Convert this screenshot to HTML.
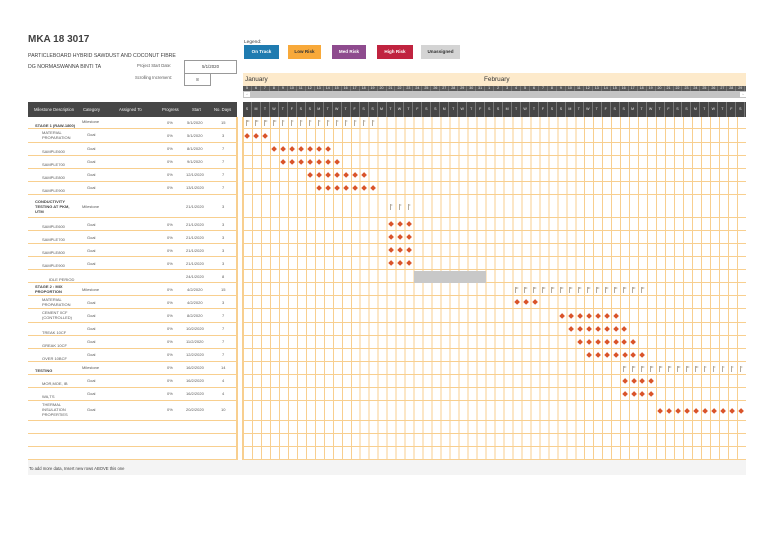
<!DOCTYPE html>
<html><head><meta charset="utf-8"><style>
*{margin:0;padding:0;box-sizing:border-box}
body{width:768px;height:543px;background:#fff;font-family:"Liberation Sans",sans-serif;color:#404040;position:relative;overflow:hidden}
.a{position:absolute;white-space:nowrap}
.t{font-size:4.2px;line-height:5px}
.row{position:absolute;left:28px;width:209px;border-bottom:1px solid #f8cf8f}
.grow{position:absolute;left:243px;width:503px;border-bottom:1px solid #f8cf8f}
.grid{position:absolute;left:243px;top:117px;width:503px;height:343px;background:repeating-linear-gradient(to right,#f8cf8f 0 1px,transparent 1px 8.98px)}
.bar{position:absolute;display:flex}
.bar i{display:block;width:8.98px;flex:none;height:100%;position:relative}
.d i::after{content:"";position:absolute;left:2.4px;top:50%;width:4.2px;height:4.2px;margin-top:-2.1px;background:#d9542a;transform:rotate(45deg)}
.f i::before{content:"";position:absolute;left:3px;top:50%;margin-top:-3px;width:0.8px;height:6px;background:#b3aa9c}
.f i::after{content:"";position:absolute;left:3.6px;top:50%;margin-top:-3px;border-left:3px solid #b3aa9c;border-top:1.5px solid transparent;border-bottom:1.5px solid transparent}
.hdr{display:flex;position:absolute;left:243px;width:503px;overflow:hidden}
.hdr span{width:8.98px;flex:none;text-align:center;font-size:3.6px;color:#eee;border-right:0.5px solid #777}
.lg{position:absolute;top:45px;height:14px;font-size:4.6px;font-weight:bold;text-align:center;line-height:13px}
.c{position:absolute;font-size:4px;line-height:5px;color:#595959;white-space:nowrap}
</style></head><body>
<div class="a" style="left:28px;top:34px;font-size:10px;font-weight:bold;color:#404040">MKA 18 3017</div>
<div class="a" style="left:28px;top:53px;font-size:5.2px">PARTICLEBOARD HYBRID SAWDUST AND COCONUT FIBRE</div>
<div class="a" style="left:28px;top:64px;font-size:5.2px">DG NORMASWANNA BINTI TA</div>
<div class="a t" style="left:137px;top:63px;color:#595959">Project Start Date:</div>
<div class="a t" style="left:135px;top:75px;color:#595959">Scrolling Increment:</div>
<div class="a" style="left:184px;top:60px;width:53px;height:14px;border:1px solid #999;font-size:4.4px;text-align:center;line-height:12px">5/1/2020</div>
<div class="a" style="left:184px;top:73px;width:27px;height:13px;border:1px solid #999;font-size:4.4px;text-align:center;line-height:11px">8</div>

<div class="a" style="left:244px;top:40px;font-size:4.8px">Legend:</div>
<div class="lg" style="left:244px;width:35px;background:#1f7bb0;color:#fff">On Track</div>
<div class="lg" style="left:288px;width:33px;background:#f8a93a;color:#333">Low Risk</div>
<div class="lg" style="left:332px;width:34px;background:#8e4b8e;color:#fff">Med Risk</div>
<div class="lg" style="left:377px;width:36px;background:#c0233f;color:#fff">High Risk</div>
<div class="lg" style="left:421px;width:39px;background:#d4d4d4;color:#333">Unassigned</div>

<div class="a" style="left:243px;top:73px;width:503px;height:13px;background:#fdeacb"></div>
<div class="a" style="left:245px;top:76px;font-size:6.4px;color:#333">January</div>
<div class="a" style="left:484px;top:76px;font-size:6.4px;color:#333">February</div>
<div class="hdr" style="top:86px;height:5px;background:#595959;line-height:5px">
<span>5</span><span>6</span><span>7</span><span>8</span><span>9</span><span>10</span><span>11</span><span>12</span><span>13</span><span>14</span><span>15</span><span>16</span><span>17</span><span>18</span><span>19</span><span>20</span><span>21</span><span>22</span><span>23</span><span>24</span><span>25</span><span>26</span><span>27</span><span>28</span><span>29</span><span>30</span><span>31</span><span>1</span><span>2</span><span>3</span><span>4</span><span>5</span><span>6</span><span>7</span><span>8</span><span>9</span><span>10</span><span>11</span><span>12</span><span>13</span><span>14</span><span>15</span><span>16</span><span>17</span><span>18</span><span>19</span><span>20</span><span>21</span><span>22</span><span>23</span><span>24</span><span>25</span><span>26</span><span>27</span><span>28</span><span>29</span></div>
<div class="a" style="left:243px;top:91px;width:503px;height:7px;background:#c4c4c4"></div>
<div class="a" style="left:244px;top:92px;width:6px;height:5px;background:#fff;font-size:3px;text-align:center;line-height:5px">‹</div>
<div class="a" style="left:740px;top:92px;width:6px;height:5px;background:#fff;font-size:3px;text-align:center;line-height:5px">›</div>
<div class="hdr" style="top:102px;height:15px;background:#464646;line-height:15px">
<span>S</span><span>M</span><span>T</span><span>W</span><span>T</span><span>F</span><span>S</span><span>S</span><span>M</span><span>T</span><span>W</span><span>T</span><span>F</span><span>S</span><span>S</span><span>M</span><span>T</span><span>W</span><span>T</span><span>F</span><span>S</span><span>S</span><span>M</span><span>T</span><span>W</span><span>T</span><span>F</span><span>S</span><span>S</span><span>M</span><span>T</span><span>W</span><span>T</span><span>F</span><span>S</span><span>S</span><span>M</span><span>T</span><span>W</span><span>T</span><span>F</span><span>S</span><span>S</span><span>M</span><span>T</span><span>W</span><span>T</span><span>F</span><span>S</span><span>S</span><span>M</span><span>T</span><span>W</span><span>T</span><span>F</span><span>S</span></div>

<div class="a" style="left:28px;top:102px;width:209px;height:15px;background:#464646;color:#eee;font-size:4.2px;line-height:15px">
<span class="a" style="left:6px">Milestone Description</span><span class="a" style="left:55px">Category</span><span class="a" style="left:91px">Assigned To</span><span class="a" style="left:134px">Progress</span><span class="a" style="left:164px">Start</span><span class="a" style="left:186px">No. Days</span></div>

<div class="grid"></div>
<div class="a" style="left:236px;top:117px;width:2px;height:343px;background:#f8cf8f"></div>
<div class="a" style="left:242px;top:117px;width:1.5px;height:343px;background:#f8cf8f"></div>

<div class="row" style="top:117px;height:12px"></div><div class="grow" style="top:117px;height:12px"></div>
<div class="row" style="top:129px;height:14px"></div><div class="grow" style="top:129px;height:14px"></div>
<div class="row" style="top:143px;height:13px"></div><div class="grow" style="top:143px;height:13px"></div>
<div class="row" style="top:156px;height:13px"></div><div class="grow" style="top:156px;height:13px"></div>
<div class="row" style="top:169px;height:13px"></div><div class="grow" style="top:169px;height:13px"></div>
<div class="row" style="top:182px;height:13px"></div><div class="grow" style="top:182px;height:13px"></div>
<div class="row" style="top:195px;height:23px"></div><div class="grow" style="top:195px;height:23px"></div>
<div class="row" style="top:218px;height:13px"></div><div class="grow" style="top:218px;height:13px"></div>
<div class="row" style="top:231px;height:13px"></div><div class="grow" style="top:231px;height:13px"></div>
<div class="row" style="top:244px;height:13px"></div><div class="grow" style="top:244px;height:13px"></div>
<div class="row" style="top:257px;height:13px"></div><div class="grow" style="top:257px;height:13px"></div>
<div class="row" style="top:270px;height:13px"></div><div class="grow" style="top:270px;height:13px"></div>
<div class="row" style="top:283px;height:13px"></div><div class="grow" style="top:283px;height:13px"></div>
<div class="row" style="top:296px;height:13px"></div><div class="grow" style="top:296px;height:13px"></div>
<div class="row" style="top:309px;height:14px"></div><div class="grow" style="top:309px;height:14px"></div>
<div class="row" style="top:323px;height:13px"></div><div class="grow" style="top:323px;height:13px"></div>
<div class="row" style="top:336px;height:13px"></div><div class="grow" style="top:336px;height:13px"></div>
<div class="row" style="top:349px;height:13px"></div><div class="grow" style="top:349px;height:13px"></div>
<div class="row" style="top:362px;height:13px"></div><div class="grow" style="top:362px;height:13px"></div>
<div class="row" style="top:375px;height:13px"></div><div class="grow" style="top:375px;height:13px"></div>
<div class="row" style="top:388px;height:13px"></div><div class="grow" style="top:388px;height:13px"></div>
<div class="row" style="top:401px;height:20px"></div><div class="grow" style="top:401px;height:20px"></div>
<div class="row" style="top:421px;height:13px"></div><div class="grow" style="top:421px;height:13px"></div>
<div class="row" style="top:434px;height:13px"></div><div class="grow" style="top:434px;height:13px"></div>
<div class="row" style="top:447px;height:13px"></div><div class="grow" style="top:447px;height:13px"></div>

<div class="a" style="left:28px;top:460px;width:718px;height:15px;background:#f4f4f4"></div>
<div class="a t" style="left:29px;top:466px">To add more data, Insert new rows ABOVE this one</div>

<div class="c" style="left:35px;top:123px;font-weight:bold;color:#404040">STAGE 1 (RAW-1800)</div><div class="c" style="left:82px;top:119px">Milestone</div><div class="c" style="left:167px;top:120px">0%</div><div class="c" style="left:187px;top:120px">5/1/2020</div><div class="c" style="left:221px;top:120px">15</div>
<div class="c" style="left:42px;top:130px">MATERIAL<br>PROPARATION</div><div class="c" style="left:87px;top:132px">Goal</div><div class="c" style="left:167px;top:133px">0%</div><div class="c" style="left:187px;top:133px">5/1/2020</div><div class="c" style="left:222px;top:133px">3</div>
<div class="c" style="left:42px;top:149px">SAMPLE600</div><div class="c" style="left:87px;top:146px">Goal</div><div class="c" style="left:167px;top:146px">0%</div><div class="c" style="left:187px;top:146px">8/1/2020</div><div class="c" style="left:222px;top:146px">7</div>
<div class="c" style="left:42px;top:162px">SAMPLE700</div><div class="c" style="left:87px;top:159px">Goal</div><div class="c" style="left:167px;top:159px">0%</div><div class="c" style="left:187px;top:159px">9/1/2020</div><div class="c" style="left:222px;top:159px">7</div>
<div class="c" style="left:42px;top:175px">SAMPLE800</div><div class="c" style="left:87px;top:172px">Goal</div><div class="c" style="left:167px;top:172px">0%</div><div class="c" style="left:186px;top:172px">12/1/2020</div><div class="c" style="left:222px;top:172px">7</div>
<div class="c" style="left:42px;top:188px">SAMPLE900</div><div class="c" style="left:87px;top:185px">Goal</div><div class="c" style="left:167px;top:185px">0%</div><div class="c" style="left:186px;top:185px">13/1/2020</div><div class="c" style="left:222px;top:185px">7</div>
<div class="c" style="left:35px;top:199px;font-weight:bold;color:#404040">CONDUCTIVITY<br>TESTING AT PKM,<br>UTM</div><div class="c" style="left:82px;top:204px">Milestone</div><div class="c" style="left:186px;top:204px">21/1/2020</div><div class="c" style="left:222px;top:204px">3</div>
<div class="c" style="left:42px;top:224px">SAMPLE600</div><div class="c" style="left:87px;top:222px">Goal</div><div class="c" style="left:167px;top:222px">0%</div><div class="c" style="left:186px;top:222px">21/1/2020</div><div class="c" style="left:222px;top:222px">3</div>
<div class="c" style="left:42px;top:237px">SAMPLE700</div><div class="c" style="left:87px;top:235px">Goal</div><div class="c" style="left:167px;top:235px">0%</div><div class="c" style="left:186px;top:235px">21/1/2020</div><div class="c" style="left:222px;top:235px">3</div>
<div class="c" style="left:42px;top:250px">SAMPLE800</div><div class="c" style="left:87px;top:248px">Goal</div><div class="c" style="left:167px;top:248px">0%</div><div class="c" style="left:186px;top:248px">21/1/2020</div><div class="c" style="left:222px;top:248px">3</div>
<div class="c" style="left:42px;top:263px">SAMPLE900</div><div class="c" style="left:87px;top:261px">Goal</div><div class="c" style="left:167px;top:261px">0%</div><div class="c" style="left:186px;top:261px">21/1/2020</div><div class="c" style="left:222px;top:261px">3</div>
<div class="c" style="left:49px;top:277px">IDLE PERIOD</div><div class="c" style="left:186px;top:274px">24/1/2020</div><div class="c" style="left:222px;top:274px">8</div>
<div class="c" style="left:35px;top:284px;font-weight:bold;color:#404040">STAGE 2 : MIX<br>PROPORTION</div><div class="c" style="left:82px;top:287px">Milestone</div><div class="c" style="left:167px;top:287px">0%</div><div class="c" style="left:187px;top:287px">4/2/2020</div><div class="c" style="left:221px;top:287px">15</div>
<div class="c" style="left:42px;top:297px">MATERIAL<br>PROPARATION</div><div class="c" style="left:87px;top:300px">Goal</div><div class="c" style="left:167px;top:300px">0%</div><div class="c" style="left:187px;top:300px">4/2/2020</div><div class="c" style="left:222px;top:300px">3</div>
<div class="c" style="left:42px;top:310px">CEMENT 0CF<br>(CONTROLLED)</div><div class="c" style="left:87px;top:313px">Goal</div><div class="c" style="left:167px;top:313px">0%</div><div class="c" style="left:187px;top:313px">8/2/2020</div><div class="c" style="left:222px;top:313px">7</div>
<div class="c" style="left:42px;top:330px">TREAK 10CF</div><div class="c" style="left:87px;top:326px">Goal</div><div class="c" style="left:167px;top:326px">0%</div><div class="c" style="left:186px;top:326px">10/2/2020</div><div class="c" style="left:222px;top:326px">7</div>
<div class="c" style="left:42px;top:343px">GREAK 10CF</div><div class="c" style="left:87px;top:339px">Goal</div><div class="c" style="left:167px;top:339px">0%</div><div class="c" style="left:186px;top:339px">11/2/2020</div><div class="c" style="left:222px;top:339px">7</div>
<div class="c" style="left:42px;top:356px">OVER 10BCF</div><div class="c" style="left:87px;top:352px">Goal</div><div class="c" style="left:167px;top:352px">0%</div><div class="c" style="left:186px;top:352px">12/2/2020</div><div class="c" style="left:222px;top:352px">7</div>
<div class="c" style="left:35px;top:368px;font-weight:bold;color:#404040">TESTING</div><div class="c" style="left:82px;top:365px">Milestone</div><div class="c" style="left:167px;top:365px">0%</div><div class="c" style="left:186px;top:365px">16/2/2020</div><div class="c" style="left:221px;top:365px">14</div>
<div class="c" style="left:42px;top:381px">MOR,MOE, IB</div><div class="c" style="left:87px;top:378px">Goal</div><div class="c" style="left:167px;top:378px">0%</div><div class="c" style="left:186px;top:378px">16/2/2020</div><div class="c" style="left:222px;top:378px">4</div>
<div class="c" style="left:42px;top:394px">WA,TS</div><div class="c" style="left:87px;top:391px">Goal</div><div class="c" style="left:167px;top:391px">0%</div><div class="c" style="left:186px;top:391px">16/2/2020</div><div class="c" style="left:222px;top:391px">4</div>
<div class="c" style="left:42px;top:402px">THERMAL<br>INSULATION<br>PROPERTIES</div><div class="c" style="left:87px;top:407px">Goal</div><div class="c" style="left:167px;top:407px">0%</div><div class="c" style="left:186px;top:407px">20/2/2020</div><div class="c" style="left:221px;top:407px">10</div>

<div class="bar f" style="left:243px;top:117px;height:12px"><i></i><i></i><i></i><i></i><i></i><i></i><i></i><i></i><i></i><i></i><i></i><i></i><i></i><i></i><i></i></div>
<div class="bar d" style="left:243px;top:129px;height:14px"><i></i><i></i><i></i></div>
<div class="bar d" style="left:269.94px;top:143px;height:13px"><i></i><i></i><i></i><i></i><i></i><i></i><i></i></div>
<div class="bar d" style="left:278.92px;top:156px;height:13px"><i></i><i></i><i></i><i></i><i></i><i></i><i></i></div>
<div class="bar d" style="left:305.86px;top:169px;height:13px"><i></i><i></i><i></i><i></i><i></i><i></i><i></i></div>
<div class="bar d" style="left:314.84px;top:182px;height:13px"><i></i><i></i><i></i><i></i><i></i><i></i><i></i></div>
<div class="bar f" style="left:386.68px;top:195px;height:23px"><i></i><i></i><i></i></div>
<div class="bar d" style="left:386.68px;top:218px;height:13px"><i></i><i></i><i></i></div>
<div class="bar d" style="left:386.68px;top:231px;height:13px"><i></i><i></i><i></i></div>
<div class="bar d" style="left:386.68px;top:244px;height:13px"><i></i><i></i><i></i></div>
<div class="bar d" style="left:386.68px;top:257px;height:13px"><i></i><i></i><i></i></div>
<div class="a" style="left:414px;top:271px;width:72px;height:12px;background:#c8c8c8"></div>
<div class="bar f" style="left:512.4px;top:283px;height:13px"><i></i><i></i><i></i><i></i><i></i><i></i><i></i><i></i><i></i><i></i><i></i><i></i><i></i><i></i><i></i></div>
<div class="bar d" style="left:512.4px;top:296px;height:13px"><i></i><i></i><i></i></div>
<div class="bar d" style="left:557.3px;top:309px;height:14px"><i></i><i></i><i></i><i></i><i></i><i></i><i></i></div>
<div class="bar d" style="left:566.28px;top:323px;height:13px"><i></i><i></i><i></i><i></i><i></i><i></i><i></i></div>
<div class="bar d" style="left:575.26px;top:336px;height:13px"><i></i><i></i><i></i><i></i><i></i><i></i><i></i></div>
<div class="bar d" style="left:584.24px;top:349px;height:13px"><i></i><i></i><i></i><i></i><i></i><i></i><i></i></div>
<div class="bar f" style="left:620.16px;top:362px;height:13px"><i></i><i></i><i></i><i></i><i></i><i></i><i></i><i></i><i></i><i></i><i></i><i></i><i></i><i></i></div>
<div class="bar d" style="left:620.16px;top:375px;height:13px"><i></i><i></i><i></i><i></i></div>
<div class="bar d" style="left:620.16px;top:388px;height:13px"><i></i><i></i><i></i><i></i></div>
<div class="bar d" style="left:656.08px;top:401px;height:20px"><i></i><i></i><i></i><i></i><i></i><i></i><i></i><i></i><i></i><i></i></div>
</body></html>
